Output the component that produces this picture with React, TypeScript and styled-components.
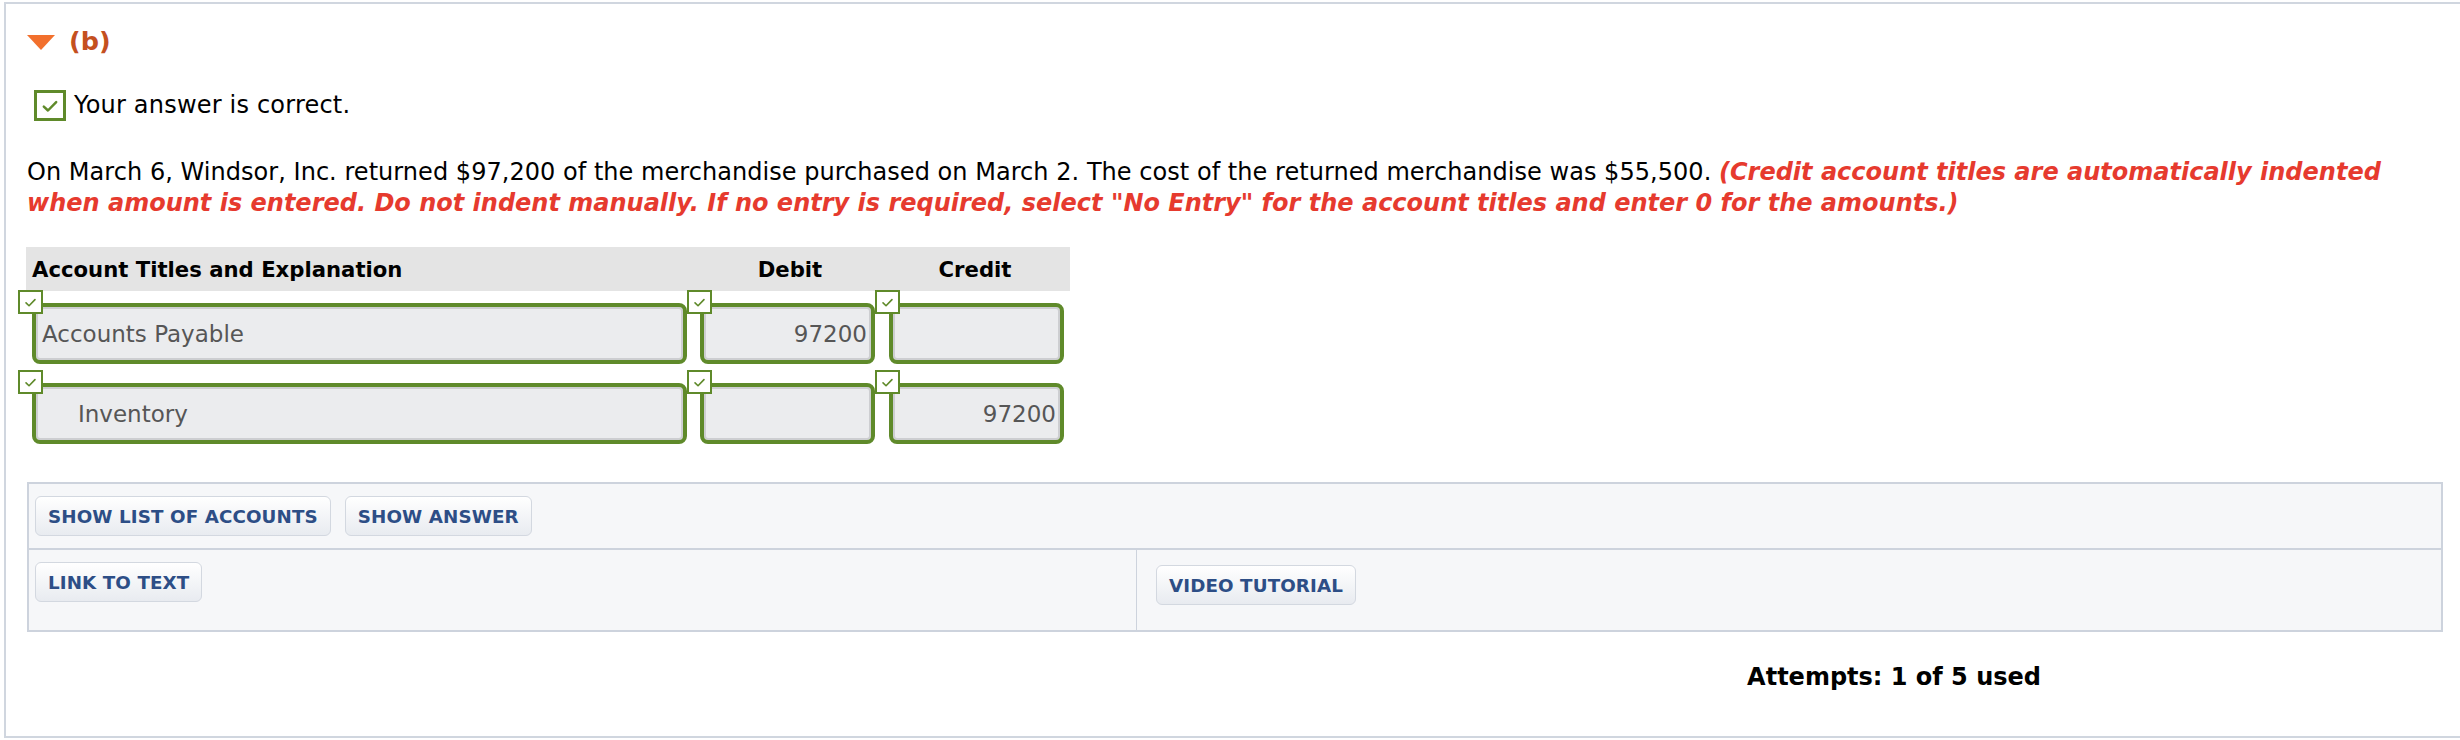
import React from 'react';
import styled, { createGlobalStyle } from 'styled-components';

const GlobalStyle = createGlobalStyle`
  html, body { margin: 0; padding: 0; background: #ffffff; }
  body {
    font-family: "DejaVu Sans", Verdana, "Liberation Sans", sans-serif;
    color: #000;
    overflow: hidden;
  }
  * { box-sizing: border-box; }
`;

const GREEN = '#5f8a2a';

const Frame = styled.div`
  margin: 2px 0 0 4px;
  height: 736px;
  border: 2px solid #d0d6df;
  border-right: none;
  padding: 0 17px 0 21px;
  display: flex;
  flex-direction: column;
`;

const TitleRow = styled.div`
  display: flex;
  align-items: center;
  gap: 14px;
  height: 30px;
  margin-top: 22px;
`;

const Triangle = styled.div`
  width: 0;
  height: 0;
  border-left: 14px solid transparent;
  border-right: 14px solid transparent;
  border-top: 15px solid #f2702d;
  margin-top: 2px;
`;

const PartLabel = styled.span`
  font-size: 25.5px;
  font-weight: bold;
  color: #c4501f;
  line-height: 30px;
`;

const ResultRow = styled.div`
  display: flex;
  align-items: center;
  gap: 8px;
  margin: 34px 0 0 7px;
`;

const CheckBox = styled.div<{ $size: 'lg' | 'sm' }>`
  width: ${(p) => (p.$size === 'lg' ? '32px' : '25px')};
  height: ${(p) => (p.$size === 'lg' ? '31px' : '24px')};
  border: ${(p) => (p.$size === 'lg' ? '3px' : '2px')} solid ${GREEN};
  background: #fff;
  display: flex;
  align-items: center;
  justify-content: center;
  flex: none;
`;

const ResultText = styled.span`
  font-size: 24px;
  line-height: 31px;
  letter-spacing: 0.2px;
`;

const Prompt = styled.p`
  margin: 36px 0 0 0;
  font-size: 24px;
  line-height: 31px;
  letter-spacing: 0.04px;
`;

const Instruction = styled.em`
  color: #e63a2e;
  font-weight: bold;
  font-style: oblique;
  letter-spacing: 0;
`;

const Table = styled.div`
  margin-top: 28px;
  display: flex;
  flex-direction: column;
`;

const HeaderRow = styled.div`
  display: grid;
  grid-template-columns: 674px 180px 190px;
  height: 44px;
  margin-left: -1px;
  width: 1044px;
  background: #e4e4e4;
  align-items: center;
  font-size: 21.2px;
  font-weight: bold;
`;

const HeaderCell = styled.div<{ $align: 'left' | 'center' }>`
  text-align: ${(p) => p.$align};
  padding-left: ${(p) => (p.$align === 'left' ? '6px' : '0')};
`;

const EntryRow = styled.div<{ $first?: boolean }>`
  display: grid;
  grid-template-columns: 669px 188px 189px;
  margin: ${(p) => (p.$first ? '-1px' : '6px')} 0 0 -9px;
`;

const Cell = styled.div<{ $pad: number }>`
  position: relative;
  padding: 13px 0 0 ${(p) => p.$pad}px;
`;

const CellCheck = styled(CheckBox)`
  position: absolute;
  left: 0;
  top: 0;
  z-index: 1;
`;

const Field = styled.div<{ $align: 'left' | 'right'; $indent?: boolean }>`
  height: 61px;
  border: 4px solid ${GREEN};
  border-radius: 8px;
  background: #ebecee;
  box-shadow: inset 0 0 0 2px #cdced1;
  display: flex;
  align-items: center;
  justify-content: ${(p) => (p.$align === 'left' ? 'flex-start' : 'flex-end')};
  padding: 0 ${(p) => (p.$align === 'right' ? '4px' : '0')} 0
    ${(p) => (p.$align === 'left' ? (p.$indent ? '42px' : '6px') : '0')};
  font-size: 23px;
  color: #565656;
`;

const Panel = styled.div`
  margin-top: 38px;
  width: 2416px;
  border: 2px solid #cdd3dd;
  background: #f6f7f9;
  display: flex;
  flex-direction: column;
`;

const PanelRow = styled.div`
  display: flex;
  gap: 14px;
  height: 66px;
  padding: 12px 0 0 6px;
  border-bottom: 2px solid #cdd3dd;
`;

const SplitRow = styled.div`
  display: grid;
  grid-template-columns: 1107px 1fr;
  height: 80px;
`;

const SplitCell = styled.div<{ $divider?: boolean; $top: number }>`
  padding: ${(p) => p.$top}px 0 0 ${(p) => (p.$divider ? '19px' : '6px')};
  border-left: ${(p) => (p.$divider ? '1px solid #cdd3dd' : 'none')};
`;

const ActionButton = styled.button`
  height: 40px;
  padding: 0 12px;
  border: 1px solid #d3d8e0;
  border-radius: 6px;
  background: linear-gradient(#ffffff, #e8ebf0);
  font-family: "DejaVu Sans", Verdana, sans-serif;
  font-size: 18.3px;
  font-weight: bold;
  color: #2d4e86;
  letter-spacing: 0.1px;
  cursor: pointer;
`;

const Attempts = styled.div`
  margin-top: 31px;
  width: 2416px;
  padding-right: 402px;
  text-align: right;
  font-size: 24px;
  font-weight: bold;
`;

const Check: React.FC<{ size: number; stroke: number }> = ({ size, stroke }) => (
  <svg width={size} height={size} viewBox="0 0 16 16" fill="none">
    <polyline
      points="2.5,8.5 6.2,12 13.5,4.5"
      stroke={GREEN}
      strokeWidth={stroke}
      strokeLinecap="round"
      strokeLinejoin="round"
    />
  </svg>
);

type Entry = { account: string; indent?: boolean; debit: string; credit: string };

const entries: Entry[] = [
  { account: 'Accounts Payable', debit: '97200', credit: '' },
  { account: 'Inventory', indent: true, debit: '', credit: '97200' },
];

export default function App() {
  return (
    <>
      <GlobalStyle />
      <Frame>
        <TitleRow>
          <Triangle />
          <PartLabel>(b)</PartLabel>
        </TitleRow>

        <ResultRow>
          <CheckBox $size="lg">
            <Check size={18} stroke={2.2} />
          </CheckBox>
          <ResultText>Your answer is correct.</ResultText>
        </ResultRow>

        <Prompt>
          On March 6, Windsor, Inc. returned $97,200 of the merchandise purchased on March 2. The cost of the returned
          merchandise was $55,500.{' '}
          <Instruction>
            (Credit account titles are automatically indented when amount is entered. Do not indent manually. If no entry
            is required, select "No Entry" for the account titles and enter 0 for the amounts.)
          </Instruction>
        </Prompt>

        <Table>
          <HeaderRow>
            <HeaderCell $align="left">Account Titles and Explanation</HeaderCell>
            <HeaderCell $align="center">Debit</HeaderCell>
            <HeaderCell $align="center">Credit</HeaderCell>
          </HeaderRow>
          {entries.map((e, i) => (
            <EntryRow key={e.account} $first={i === 0}>
              <Cell $pad={14}>
                <CellCheck $size="sm">
                  <Check size={13} stroke={2} />
                </CellCheck>
                <Field $align="left" $indent={e.indent}>
                  {e.account}
                </Field>
              </Cell>
              <Cell $pad={13}>
                <CellCheck $size="sm">
                  <Check size={13} stroke={2} />
                </CellCheck>
                <Field $align="right">{e.debit}</Field>
              </Cell>
              <Cell $pad={14}>
                <CellCheck $size="sm">
                  <Check size={13} stroke={2} />
                </CellCheck>
                <Field $align="right">{e.credit}</Field>
              </Cell>
            </EntryRow>
          ))}
        </Table>

        <Panel>
          <PanelRow>
            <ActionButton>SHOW LIST OF ACCOUNTS</ActionButton>
            <ActionButton>SHOW ANSWER</ActionButton>
          </PanelRow>
          <SplitRow>
            <SplitCell $top={12}>
              <ActionButton>LINK TO TEXT</ActionButton>
            </SplitCell>
            <SplitCell $divider $top={15}>
              <ActionButton>VIDEO TUTORIAL</ActionButton>
            </SplitCell>
          </SplitRow>
        </Panel>

        <Attempts>Attempts: 1 of 5 used</Attempts>
      </Frame>
    </>
  );
}
